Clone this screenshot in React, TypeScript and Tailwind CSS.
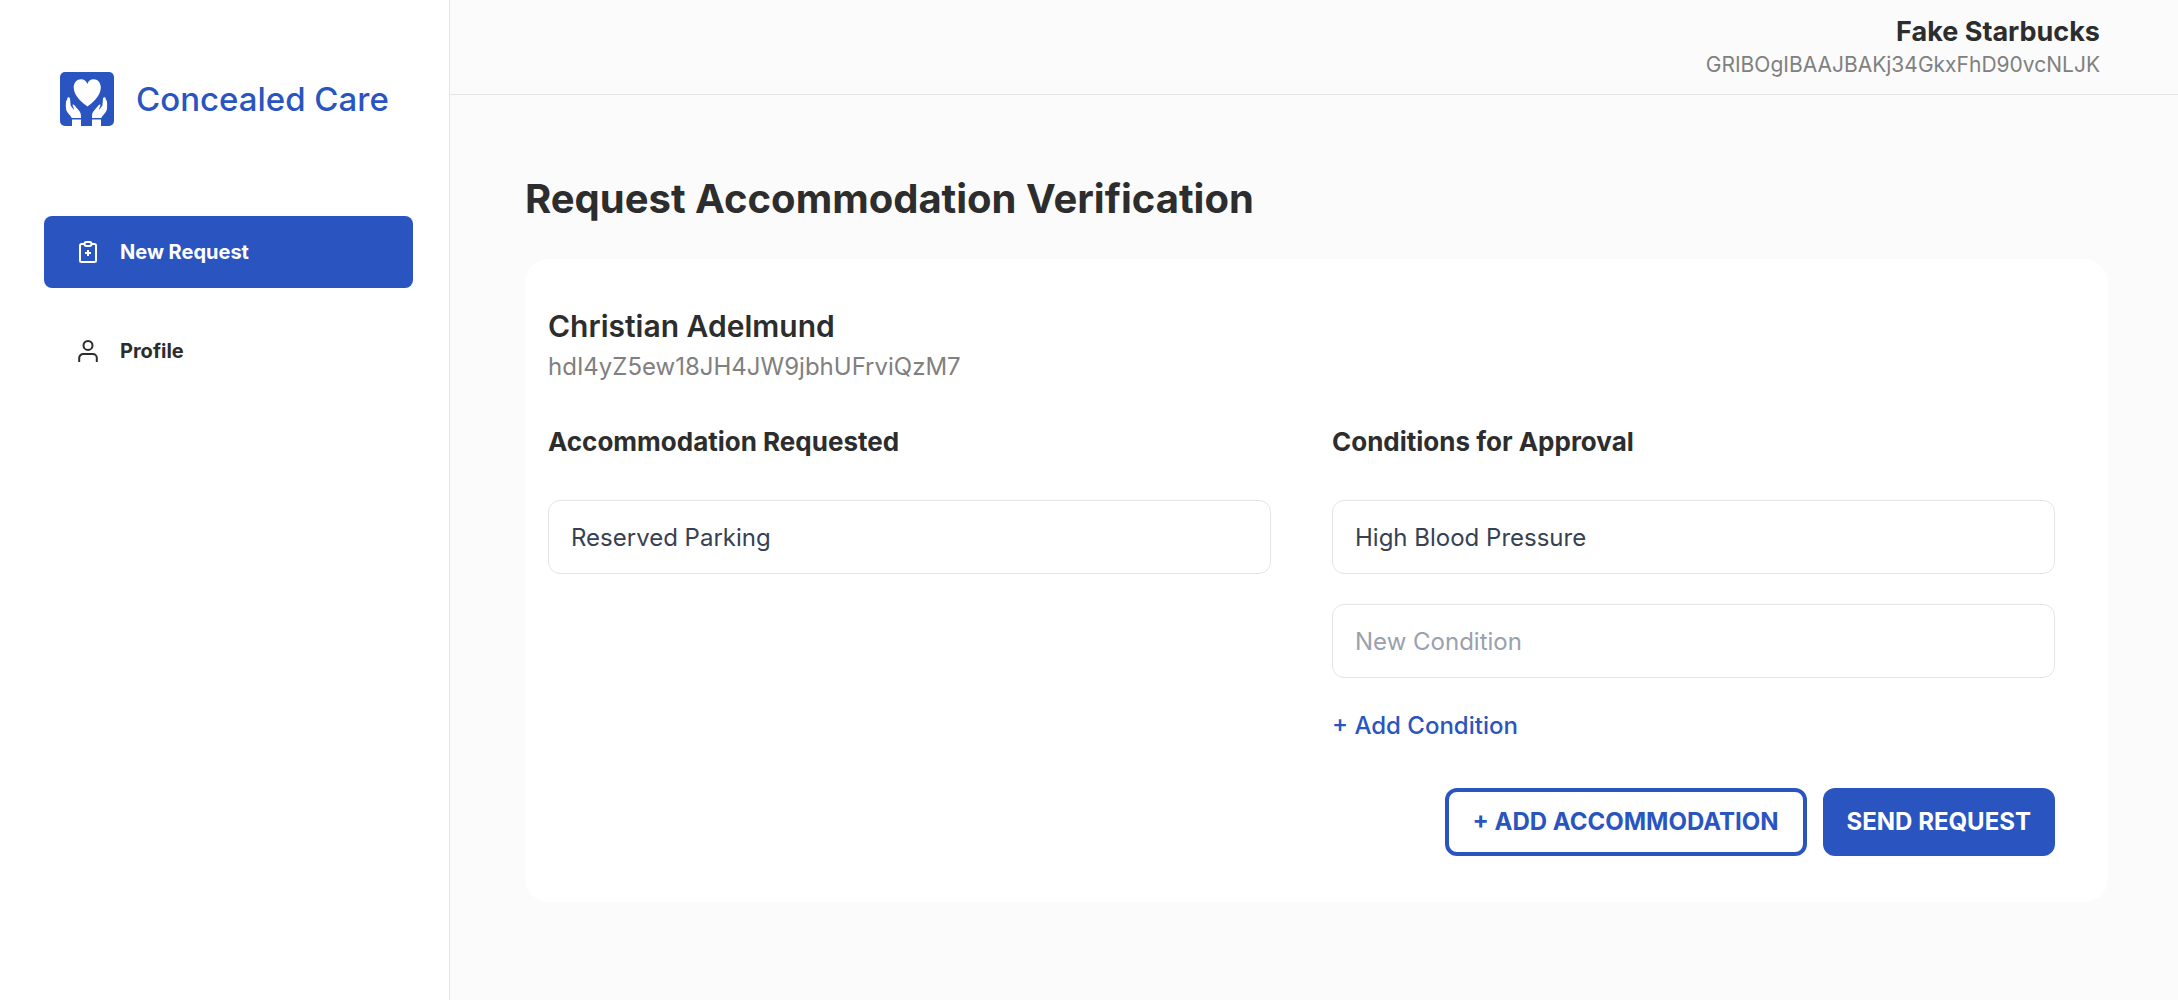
import { useState } from "react";

const navItems = [
  { label: "New Request", href: "#new-request", icon: ClipboardIcon, active: true },
  { label: "Profile", href: "#profile", icon: ProfileIcon, active: false },
];

function Hand() {
  return (
    <>
      <path d="M8.500 25.300C9.500 25.300 10 26 10.100 27.200L10.600 33.500L13.500 37.500L14 37.200L12.600 33.500C12.300 32.300 13.500 32 14.200 33L18.500 38C20.700 40.500 21 42 21 46H11.700C11 43.500 7.500 41.500 6.400 38.500C5.600 36 5.800 31 6.200 28.500L7 28.200L7.300 26.500C7.400 25.700 7.800 25.300 8.500 25.300Z" />
      <path d="M12 47.500H21V54H12Z" />
    </>
  );
}

function Logo() {
  return (
    <svg className="size-[54px] shrink-0" viewBox="0 0 54 54" fill="#fff" aria-hidden="true">
      <rect width="54" height="54" rx="5" fill="#2a55c1" />
      <path d="M27.500 34.500C24 32 13.700 24.500 13.700 15.500C13.700 10.800 17 7.300 21 7.300C24 7.300 26.500 9 27.300 12C28.200 9 30.500 7.300 33.500 7.300C37.700 7.300 40.800 10.800 40.800 15.500C40.800 24.500 31 32 27.500 34.500Z" />
      <Hand />
      <g transform="translate(53 0) scale(-1 1)">
        <Hand />
      </g>
    </svg>
  );
}

function ClipboardIcon() {
  return (
    <svg className="size-6 shrink-0" viewBox="0 0 24 24" fill="none" stroke="currentColor" strokeWidth="2" aria-hidden="true">
      <path d="M8 4H5.500A1.500 1.500 0 0 0 4 5.500V20.500A1.500 1.500 0 0 0 5.500 22H18.500A1.500 1.500 0 0 0 20 20.500V5.500A1.500 1.500 0 0 0 18.500 4H16" />
      <rect x="8.500" y="2" width="7" height="4" rx="2" />
      <path d="M12 10V16M9 13H15" />
    </svg>
  );
}

function ProfileIcon() {
  return (
    <svg className="size-6 shrink-0" viewBox="0 0 24 24" fill="none" stroke="currentColor" strokeWidth="2" aria-hidden="true">
      <circle cx="12" cy="6.400" r="4.500" />
      <path d="M3.200 23V19A4 4 0 0 1 7.200 15H16.800A4 4 0 0 1 20.800 19V23" />
    </svg>
  );
}

function Sidebar() {
  return (
    <aside className="w-[450px] shrink-0 border-r border-[#e5e5e5] bg-white pl-11 pr-9 pt-18">
      <a href="#home" className="flex items-center gap-[22px] pl-4 text-[33px] leading-[54px] font-medium text-[#2a55c1]">
        <Logo />
        Concealed Care
      </a>
      <nav className="mt-[90px] flex flex-col gap-[27px]">
        {navItems.map(({ label, href, icon: Icon, active }) => (
          <a
            key={label}
            href={href}
            className={`flex h-18 items-center gap-5 rounded-lg px-8 text-xl font-bold ${
              active ? "bg-[#2a55c1] text-white" : "text-[#2d2d2d]"
            }`}
          >
            <Icon />
            {label}
          </a>
        ))}
      </nav>
    </aside>
  );
}

const inputStyles =
  "h-[74px] w-full rounded-xl border border-[#e5e5e5] bg-white px-[22px] text-2xl text-gray-700 placeholder:text-gray-400 outline-none";

export default function App() {
  const [accommodation, setAccommodation] = useState("Reserved Parking");
  const [conditions, setConditions] = useState(["High Blood Pressure", ""]);

  const updateCondition = (index: number, value: string) => {
    setConditions(conditions.map((c, i) => (i === index ? value : c)));
  };

  return (
    <div className="flex min-h-screen bg-[#fbfbfb] font-['Inter',sans-serif] text-[#2d2d2d]">
      <Sidebar />

      <div className="min-w-0 flex-1">
        {/* Company header */}
        <header className="flex h-[95px] flex-col items-end justify-center border-b border-[#e5e5e5] pt-1 pr-[78px]">
          <p className="text-[27px] leading-8 font-bold">Fake Starbucks</p>
          <p className="text-[21px] leading-[34px] text-[#808080]">GRIBOgIBAAJBAKj34GkxFhD90vcNLJK</p>
        </header>

        <main className="pt-20 pr-[70px] pb-16 pl-[75px]">
          <h1 className="text-[40px] leading-12 font-bold">Request Accommodation Verification</h1>

          <form
            className="mt-9 rounded-3xl bg-white pt-[46px] pr-[53px] pb-[46px] pl-[23px]"
            onSubmit={(e) => e.preventDefault()}
          >
            <h2 className="text-[30px] leading-[42px] font-semibold">Christian Adelmund</h2>
            <p className="text-2xl leading-10 text-[#808080]">hdI4yZ5ew18JH4JW9jbhUFrviQzM7</p>

            <div className="mt-[39px] grid grid-cols-2 gap-[61px]">
              {/* Accommodation */}
              <div>
                <label htmlFor="accommodation" className="block text-[26px] leading-8 font-bold">
                  Accommodation Requested
                </label>
                <input
                  id="accommodation"
                  className={`mt-[42px] ${inputStyles}`}
                  value={accommodation}
                  onChange={(e) => setAccommodation(e.target.value)}
                />
              </div>

              {/* Conditions */}
              <div>
                <h3 id="conditions" className="text-[26px] leading-8 font-bold">
                  Conditions for Approval
                </h3>
                <div className="mt-[42px] flex flex-col gap-[30px]">
                  {conditions.map((condition, i) => (
                    <input
                      key={i}
                      aria-labelledby="conditions"
                      className={inputStyles}
                      placeholder="New Condition"
                      value={condition}
                      onChange={(e) => updateCondition(i, e.target.value)}
                    />
                  ))}
                </div>
                <button
                  type="button"
                  className="mt-8 block text-2xl font-medium text-[#2a55c1]"
                  onClick={() => setConditions([...conditions, ""])}
                >
                  + Add Condition
                </button>
              </div>
            </div>

            <div className="mt-[46px] flex justify-end gap-4">
              <button
                type="button"
                className="h-[68px] rounded-xl border-4 border-[#2a55c1] px-6 text-2xl font-bold text-[#2a55c1]"
              >
                + ADD ACCOMMODATION
              </button>
              <button type="submit" className="h-[68px] rounded-xl bg-[#2a55c1] px-6 text-2xl font-bold text-white">
                SEND REQUEST
              </button>
            </div>
          </form>
        </main>
      </div>
    </div>
  );
}
